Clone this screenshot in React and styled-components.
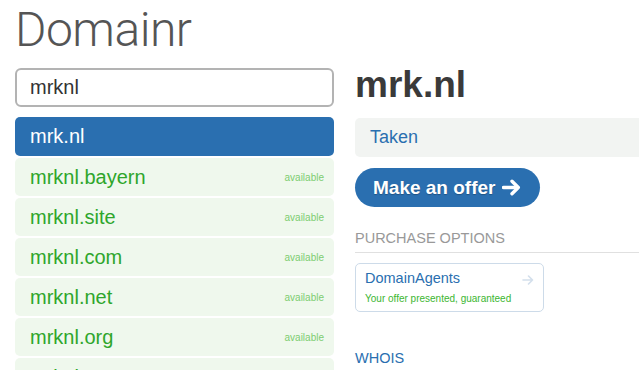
import React from "react";
import styled, { createGlobalStyle } from "styled-components";

const Global = createGlobalStyle`
  html, body { margin: 0; padding: 0; background: #fff; overflow: hidden; }
  body { font-family: "Liberation Sans", Arial, sans-serif; }
  * { box-sizing: border-box; }
`;

const Page = styled.div`
  width: 639px;
  height: 370px;
  overflow: hidden;
  padding: 6px 0 0 15px;
`;

const Logo = styled.h1`
  margin: 0 0 14px 0;
  font-family: Roboto, "Liberation Sans", sans-serif;
  font-weight: 300;
  font-size: 48px;
  line-height: 48px;
  height: 48px;
  color: #555;
  letter-spacing: -0.5px;
`;

const Columns = styled.div`
  display: grid;
  grid-template-columns: 319px 330px;
  column-gap: 21px;
  align-items: start;
`;

const LeftCol = styled.div`
  display: flex;
  flex-direction: column;
`;

const Search = styled.input`
  height: 39px;
  width: 319px;
  border: 2px solid #b3b3b3;
  border-radius: 6px;
  padding: 0 0 0 13px;
  font-family: "Liberation Sans", Arial, sans-serif;
  font-size: 20px;
  color: #333;
  outline: none;
  background: #fff;
  margin-bottom: 10px;
`;

const List = styled.div`
  display: flex;
  flex-direction: column;
  gap: 2px;
`;

const Row = styled.div`
  height: ${(p) => (p.$selected ? 39 : 38)}px;
  border-radius: 5px;
  background: ${(p) => (p.$selected ? "#2a6fb0" : "#eff8ed")};
  display: flex;
  align-items: center;
  justify-content: space-between;
  padding: 0 10px 0 15px;
`;

const RowName = styled.span`
  font-size: 20px;
  color: ${(p) => (p.$selected ? "#fff" : "#2ea62b")};
`;

const Status = styled.span`
  font-size: 10px;
  color: #7ccd70;
`;

const RightCol = styled.div`
  display: flex;
  flex-direction: column;
  align-items: flex-start;
  margin-top: -3px;
`;

const DomainTitle = styled.h2`
  margin: 0 0 13px 0;
  font-size: 37px;
  font-weight: 700;
  line-height: 40px;
  color: #3a3a3a;
`;

const StatusBox = styled.div`
  width: 100%;
  height: 39px;
  border-radius: 5px;
  background: #f2f4f2;
  display: flex;
  align-items: center;
  padding-left: 15px;
  font-size: 18px;
  color: #2a6fb0;
  margin-bottom: 11px;
`;

const OfferButton = styled.button`
  height: 39px;
  width: 185px;
  border: none;
  border-radius: 20px;
  background: #2a6fb0;
  color: #fff;
  font-family: "Liberation Sans", Arial, sans-serif;
  font-weight: 700;
  font-size: 19px;
  display: flex;
  align-items: center;
  gap: 7px;
  padding: 0 0 0 18px;
  text-shadow: 0 1px 1px rgba(0, 0, 0, 0.25);
  cursor: pointer;
`;

const SectionTitle = styled.div`
  width: 100%;
  margin-top: ${(p) => p.$top}px;
  font-size: 14.5px;
  line-height: 18px;
  text-transform: uppercase;
  color: ${(p) => (p.$link ? "#2a6fb0" : "#999")};
  padding-bottom: ${(p) => (p.$divider ? 5 : 0)}px;
  border-bottom: ${(p) => (p.$divider ? "1px solid #e0e0e0" : "none")};
`;

const Card = styled.div`
  margin-top: 10px;
  width: 189px;
  height: 49px;
  border: 1px solid #cddbe9;
  border-radius: 5px;
  padding: 5px 9px 0 9px;
  position: relative;
`;

const CardTitle = styled.div`
  font-size: 14.5px;
  line-height: 18px;
  color: #2a6fb0;
  margin-bottom: 5px;
`;

const CardSub = styled.div`
  font-size: 10px;
  line-height: 14px;
  color: #3cb631;
`;

const CardArrow = styled.svg`
  position: absolute;
  right: 9px;
  top: 11px;
`;

const Arrow = () => (
  <svg width="19" height="17" viewBox="0 0 19 17">
    <path d="M1.5 8.5 H15.5" stroke="#fff" strokeWidth="3.4" strokeLinecap="round" fill="none" />
    <path d="M10 2.2 L16.3 8.5 L10 14.8" stroke="#fff" strokeWidth="3.4" strokeLinecap="round" strokeLinejoin="round" fill="none" />
  </svg>
);

const rows = [
  { name: "mrknl.bayern", status: "available" },
  { name: "mrknl.site", status: "available" },
  { name: "mrknl.com", status: "available" },
  { name: "mrknl.net", status: "available" },
  { name: "mrknl.org", status: "available" },
  { name: "mrknl.xyz", status: "available" },
];

export default function App() {
  return (
    <Page>
      <Global />
      <Logo>Domainr</Logo>
      <Columns>
        <LeftCol>
          <Search defaultValue="mrknl" readOnly />
          <List>
            <Row $selected>
              <RowName $selected>mrk.nl</RowName>
            </Row>
            {rows.map((r) => (
              <Row key={r.name}>
                <RowName>{r.name}</RowName>
                <Status>{r.status}</Status>
              </Row>
            ))}
          </List>
        </LeftCol>
        <RightCol>
          <DomainTitle>mrk.nl</DomainTitle>
          <StatusBox>Taken</StatusBox>
          <OfferButton>
            <span>Make an offer</span>
            <Arrow />
          </OfferButton>
          <SectionTitle $top={22} $divider>Purchase options</SectionTitle>
          <Card>
            <CardTitle>DomainAgents</CardTitle>
            <CardSub>Your offer presented, guaranteed</CardSub>
            <CardArrow width="12" height="10" viewBox="0 0 12 10">
              <path d="M1 5 H10.5 M6.5 1 L10.5 5 L6.5 9" stroke="#d3dfec" strokeWidth="1.6" fill="none" strokeLinecap="round" strokeLinejoin="round" />
            </CardArrow>
          </Card>
          <SectionTitle $top={37} $link>Whois</SectionTitle>
        </RightCol>
      </Columns>
    </Page>
  );
}
